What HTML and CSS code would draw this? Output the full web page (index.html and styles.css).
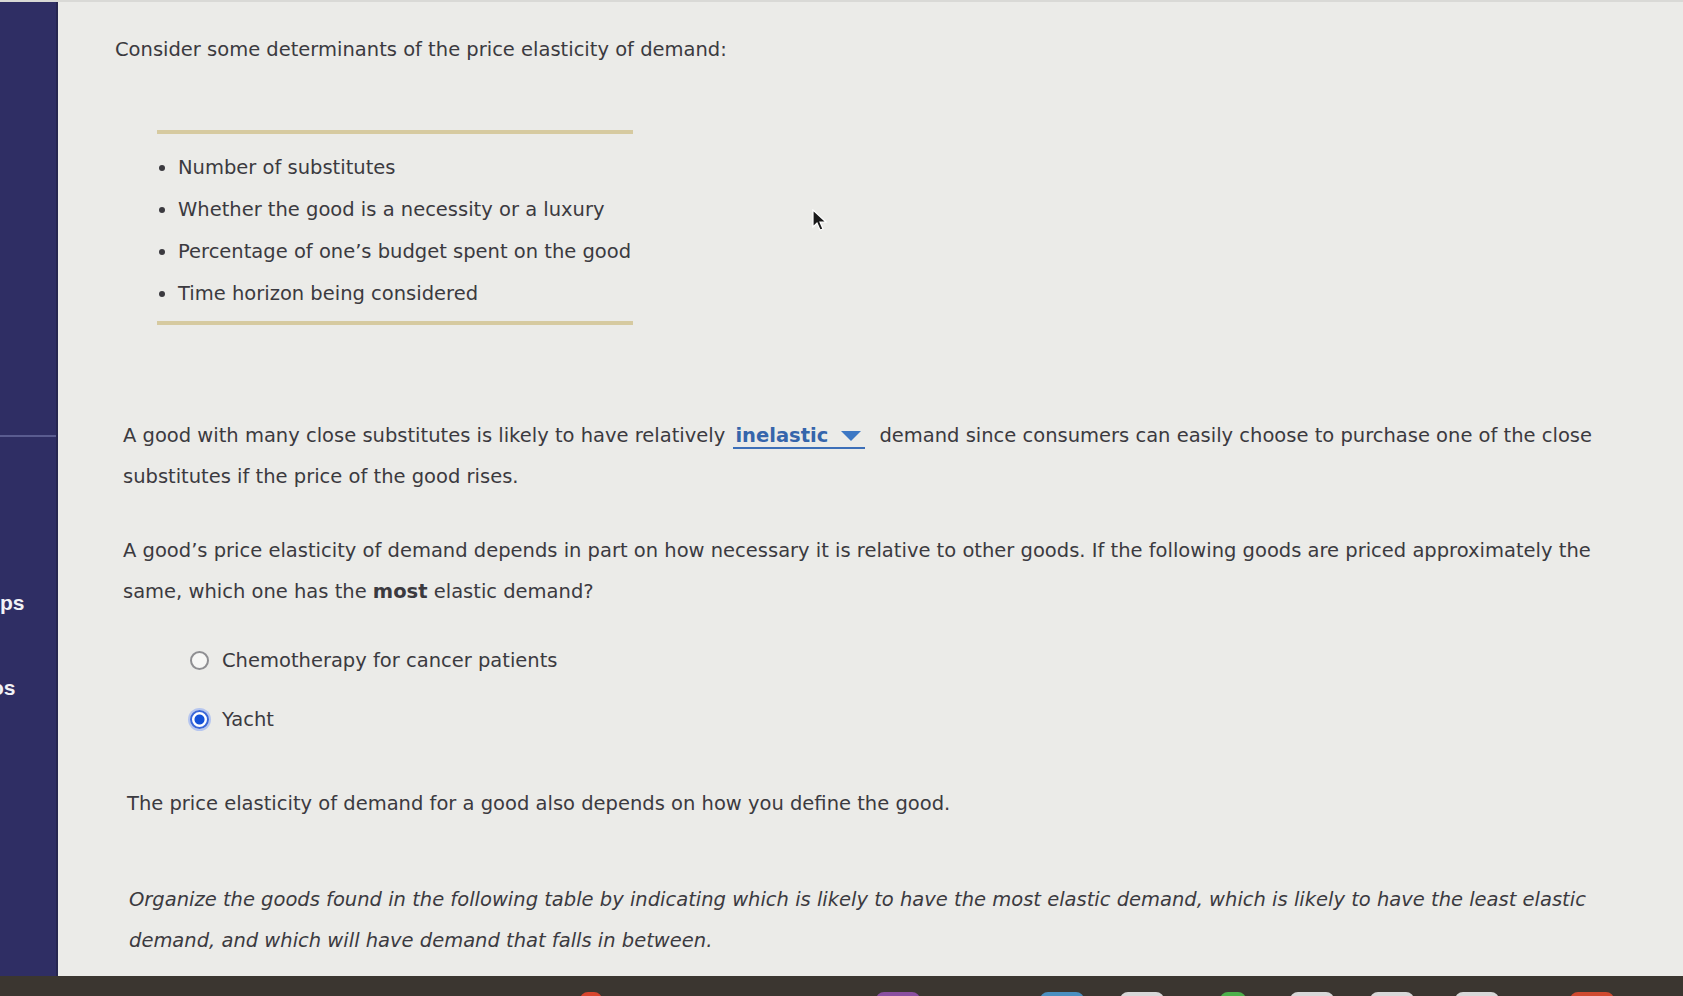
FILE: index.html
```html
<!DOCTYPE html>
<html lang="en">
<head>
<meta charset="utf-8">
<title>Price elasticity of demand</title>
<link rel="stylesheet" href="styles.css">
</head>
<body>
<div class="screen">
  <div class="workspace">
    <aside class="sidebar">
      <div class="side-rule"></div>
      <div class="side-item side-item-1">ps</div>
      <div class="side-item side-item-2">os</div>
    </aside>
    <main class="content">
      <p class="intro">Consider some determinants of the price elasticity of demand:</p>
      <div class="box">
        <ul class="determinants">
          <li>Number of substitutes</li>
          <li>Whether the good is a necessity or a luxury</li>
          <li>Percentage of one’s budget spent on the good</li>
          <li>Time horizon being considered</li>
        </ul>
      </div>
      <p class="para para-1">A good with many close substitutes is likely to have relatively <span class="dropdown"><span class="dd-value">inelastic</span><svg class="dd-arrow" width="22" height="12" viewBox="0 0 22 12"><path d="M1 1 H21 L11 11 Z" fill="#3d78c4"/></svg></span> demand since consumers can easily choose to purchase one of the close substitutes if the price of the good rises.</p>
      <p class="para para-2">A good’s price elasticity of demand depends in part on how necessary it is relative to other goods. If the following goods are priced approximately the same, which one has the <b>most</b> elastic demand?</p>
      <div class="choices">
        <label class="choice"><span class="radio"></span>Chemotherapy for cancer patients</label>
        <label class="choice"><span class="radio checked"></span>Yacht</label>
      </div>
      <p class="para para-3">The price elasticity of demand for a good also depends on how you define the good.</p>
      <p class="para para-4"><i>Organize the goods found in the following table by indicating which is likely to have the most elastic demand, which is likely to have the least elastic demand, and which will have demand that falls in between.</i></p>
      <svg class="cursor" width="16" height="24" viewBox="0 0 16 24"><path d="M1 1 L1 18 L5 14 L8 21 L11 20 L8 13 L14 13 Z" fill="#1a1a1a" stroke="#ffffff" stroke-width="1.2"/></svg>
    </main>
  </div>
  <div class="taskbar">
    <span class="dock dock-red"></span>
    <span class="dock dock-purple"></span>
    <span class="dock dock-blue"></span>
    <span class="dock dock-white"></span>
    <span class="dock dock-green"></span>
    <span class="dock dock-white"></span>
    <span class="dock dock-white"></span>
    <span class="dock dock-white"></span>
    <span class="dock dock-red2"></span>
  </div>
</div>
</body>
</html>
```
FILE: styles.css
```css
html, body {
  margin: 0;
  padding: 0;
}
body {
  width: 1683px;
  height: 996px;
  overflow: hidden;
  background: #3a352f;
  font-family: "DejaVu Sans", Verdana, sans-serif;
  color: #3b3a3f;
}
.screen {
  display: flex;
  flex-direction: column;
  height: 996px;
}
.workspace {
  display: flex;
  height: 976px;
  background: #ebebe8;
  border-top: 2px solid #d9d9d6;
  box-sizing: border-box;
}
.sidebar {
  width: 58px;
  flex: none;
  background: #2f2e64;
  border-right: 2px solid #26264f;
  box-sizing: border-box;
  position: relative;
  overflow: hidden;
}
.side-rule {
  position: absolute;
  left: 0;
  right: 0;
  top: 433px;
  height: 2px;
  background: #5a5c90;
}
.side-item {
  position: absolute;
  font-family: "Liberation Sans", Arial, sans-serif;
  font-weight: bold;
  font-size: 21px;
  color: #f2f2f6;
}
.side-item-1 {
  left: 0;
  top: 589px;
}
.side-item-2 {
  left: -9px;
  top: 674px;
}
.content {
  flex: 1;
  position: relative;
  padding: 0 0 0 57px;
}
.intro {
  margin: 34px 0 0 0;
  font-size: 19.5px;
  line-height: 28px;
}
.box {
  margin: 66px 0 0 42px;
  width: 476px;
  border-top: 4px solid #d6caa0;
  border-bottom: 4px solid #d6caa0;
  padding: 13px 0 6px 0;
}
.determinants {
  margin: 0;
  padding: 0 0 0 21px;
  font-size: 19.5px;
  line-height: 42px;
}
.para {
  font-size: 19.5px;
  line-height: 41px;
  margin: 0;
  padding-left: 8px;
  width: 1522px;
}
.para-1 {
  margin-top: 90px;
}
.para-2 {
  margin-top: 33px;
}
.dropdown {
  display: inline-flex;
  align-items: center;
  gap: 12px;
  border-bottom: 2px solid #3d6fb8;
  line-height: 22px;
  padding: 0 3px 0 2px;
  margin: 0 8px 0 2px;
}
.dd-value {
  font-weight: bold;
  color: #3565ab;
}
.dd-arrow {
  display: block;
}
.choices {
  display: flex;
  flex-direction: column;
  gap: 18px;
  margin: 28px 0 0 75px;
}
.choice {
  display: flex;
  align-items: center;
  gap: 13px;
  font-size: 19.5px;
  line-height: 41px;
}
.radio {
  width: 19px;
  height: 19px;
  border: 2px solid #8f8f92;
  border-radius: 50%;
  box-sizing: border-box;
  background: #f7f7f5;
}
.radio.checked {
  border: 2px solid #3a67d8;
  background: radial-gradient(circle, #1452d8 0 4.5px, #ffffff 5.5px);
  box-shadow: 0 0 0 2px #b6c6ef;
}
.para-3 {
  margin-top: 43px;
  padding-left: 12px;
}
.para-4 {
  margin-top: 55px;
  padding-left: 14px;
}
.cursor {
  position: absolute;
  left: 754px;
  top: 207px;
}
.taskbar {
  flex: 1;
  background: #3b3630;
  position: relative;
}
.dock {
  position: absolute;
  bottom: -8px;
  width: 44px;
  height: 12px;
  border-radius: 8px 8px 0 0;
}
.dock-red { left: 580px; width: 22px; background: #d8462e; }
.dock-purple { left: 876px; background: #8a4fa0; }
.dock-blue { left: 1040px; background: #4a8fc0; }
.dock-white { background: #d8d8d8; }
.dock-green { left: 1220px; width: 26px; background: #4cb04a; }
.dock-white:nth-of-type(4) { left: 1120px; }
.dock-white:nth-of-type(6) { left: 1290px; }
.dock-white:nth-of-type(7) { left: 1370px; }
.dock-white:nth-of-type(8) { left: 1455px; }
.dock-red2 { left: 1570px; background: #d04a30; }
```
